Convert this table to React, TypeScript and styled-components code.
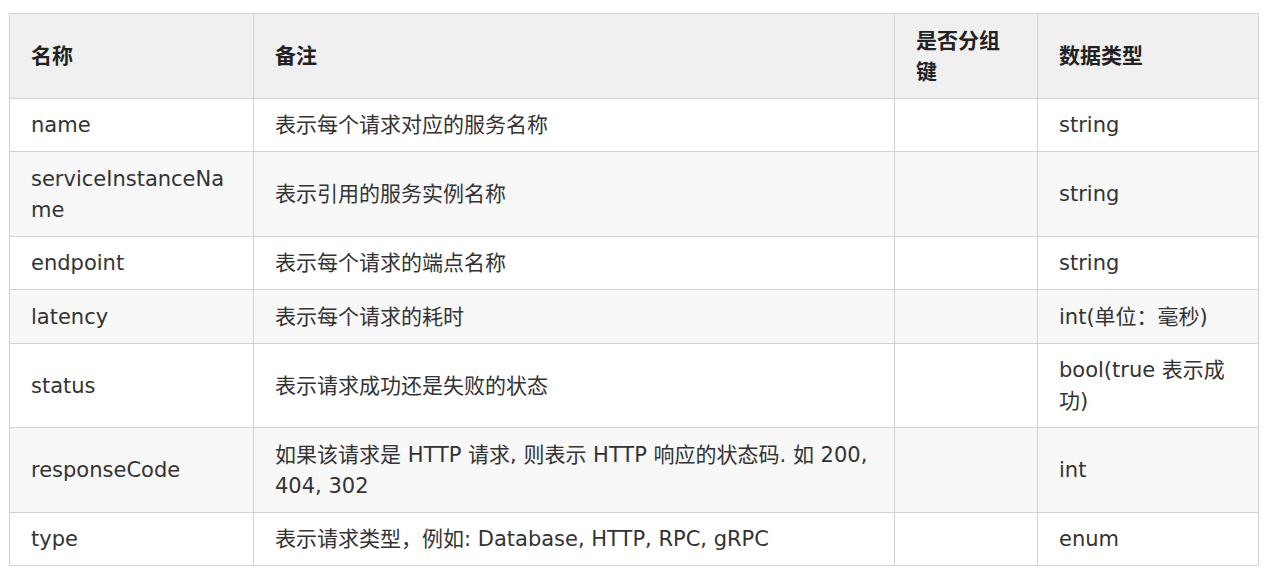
import React from 'react';
import styled, { createGlobalStyle } from 'styled-components';

// 字段说明数据
type FieldRow = {
  name: string;
  remark: string;
  groupKey: string;
  dataType: string;
};

const rows: FieldRow[] = [
  { name: 'name', remark: '表示每个请求对应的服务名称', groupKey: '', dataType: 'string' },
  { name: 'serviceInstanceName', remark: '表示引用的服务实例名称', groupKey: '', dataType: 'string' },
  { name: 'endpoint', remark: '表示每个请求的端点名称', groupKey: '', dataType: 'string' },
  { name: 'latency', remark: '表示每个请求的耗时', groupKey: '', dataType: 'int(单位：毫秒)' },
  { name: 'status', remark: '表示请求成功还是失败的状态', groupKey: '', dataType: 'bool(true 表示成功)' },
  {
    name: 'responseCode',
    remark: '如果该请求是 HTTP 请求, 则表示 HTTP 响应的状态码. 如 200, 404, 302',
    groupKey: '',
    dataType: 'int',
  },
  { name: 'type', remark: '表示请求类型，例如: Database, HTTP, RPC, gRPC', groupKey: '', dataType: 'enum' },
];

const GlobalStyle = createGlobalStyle`
  html, body {
    margin: 0;
    padding: 0;
    background: #ffffff;
  }
  body {
    font-family: "DejaVu Sans", "Noto Sans CJK SC", sans-serif;
    color: #333333;
  }
`;

// 页面容器
const Page = styled.div`
  padding: 13px 11px 0 9px;
`;

const Table = styled.table`
  width: 1249px;
  border-collapse: collapse;
  table-layout: fixed;
  font-size: 21px;
  line-height: 31px;
`;

const HeadCell = styled.th`
  background: #f0f0f0;
  border: 1px solid #d2d2d2;
  padding: 11.75px 21px 9.75px;
  text-align: left;
  vertical-align: middle;
  font-weight: bold;
  color: #222222;
  word-break: break-all;
`;

const BodyRow = styled.tr<{ $striped: boolean }>`
  background: ${(p) => (p.$striped ? '#f8f8f8' : '#ffffff')};
`;

const Cell = styled.td`
  border: 1px solid #d2d2d2;
  padding: 11.75px 21px 9.75px;
  vertical-align: middle;
  word-break: break-all;
`;

const App = () => {
  return (
    <Page>
      <GlobalStyle />
      <Table>
        <colgroup>
          <col style={{ width: 244 }} />
          <col style={{ width: 641 }} />
          <col style={{ width: 143 }} />
          <col style={{ width: 221 }} />
        </colgroup>
        <thead>
          <tr>
            <HeadCell>名称</HeadCell>
            <HeadCell>备注</HeadCell>
            <HeadCell>是否分组键</HeadCell>
            <HeadCell>数据类型</HeadCell>
          </tr>
        </thead>
        <tbody>
          {rows.map((row, i) => (
            <BodyRow key={row.name} $striped={i % 2 === 1}>
              <Cell>{row.name}</Cell>
              <Cell>{row.remark}</Cell>
              <Cell>{row.groupKey}</Cell>
              <Cell>{row.dataType}</Cell>
            </BodyRow>
          ))}
        </tbody>
      </Table>
    </Page>
  );
};

export default App;
